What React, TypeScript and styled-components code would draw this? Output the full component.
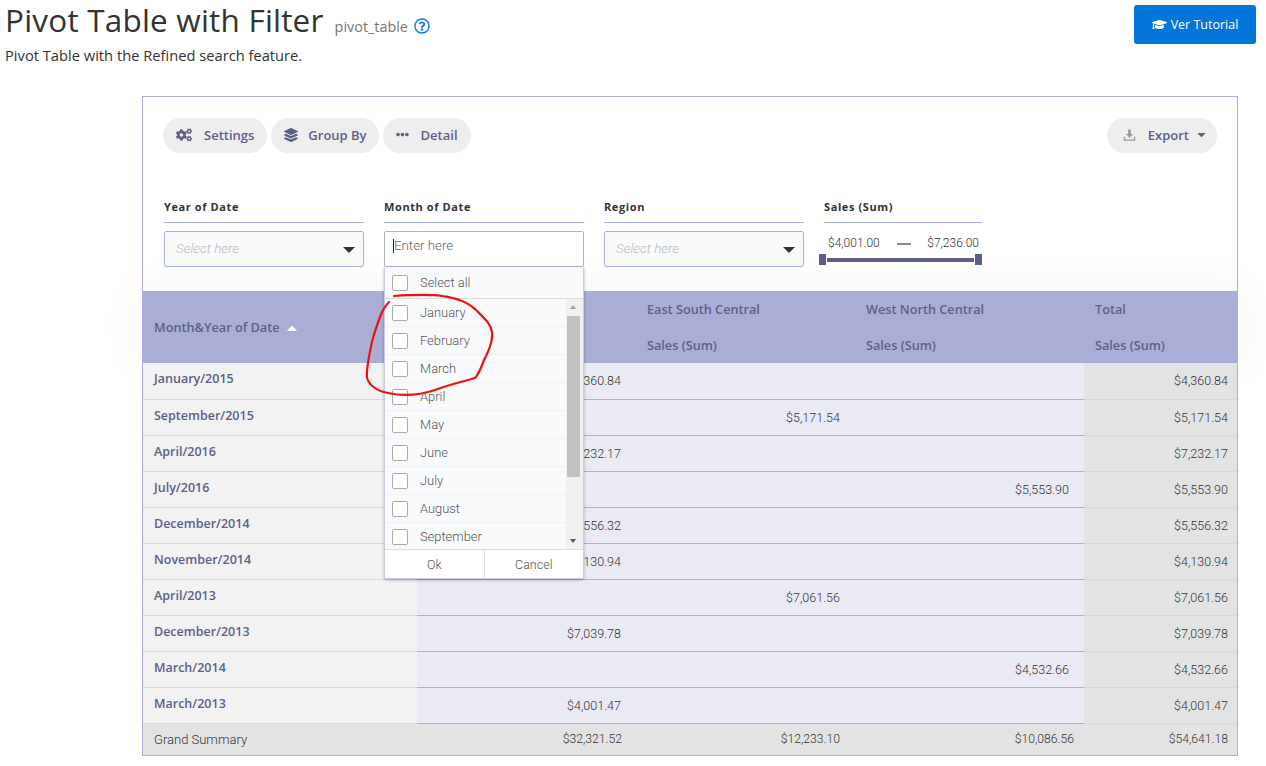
import React from 'react'
import styled, { createGlobalStyle } from 'styled-components'
import { FaCaretDown, FaCaretUp, FaCogs, FaEllipsisH, FaGraduationCap, FaLayerGroup, FaRegQuestionCircle } from 'react-icons/fa'

const GlobalStyle = createGlobalStyle`
  html, body { margin: 0; padding: 0; background: #fff; overflow: hidden; }
  body { font-family: "Open Sans", sans-serif; color: #333; }
`

const Page = styled.div`
  position: relative;
  isolation: isolate;
  width: 1266px;
  height: 766px;
  overflow: hidden;
`

const Header = styled.header`
  display: flex;
  justify-content: space-between;
  align-items: flex-start;
  height: 96px;
  padding: 5px 10px 0 5px;
  box-sizing: border-box;
`

const TitleRow = styled.div`
  display: flex;
  align-items: baseline;
  height: 34px;
  margin-top: -2px;
`

const Title = styled.h1`
  margin: 0;
  font-size: 31.5px;
  line-height: 34px;
  font-weight: 400;
  letter-spacing: 0.2px;
  color: #333;
`

const Slug = styled.span`
  margin-left: 11px;
  font-size: 14.4px;
  color: #777;
`

const HelpIcon = styled(FaRegQuestionCircle)`
  margin: 0 0 3px 6px;
  font-size: 16px;
  color: #1a7fd8;
  align-self: flex-end;
`

const Subtitle = styled.p`
  margin: 8px 0 0;
  font-size: 14.7px;
  line-height: 20px;
  color: #333;
`

const TutorialButton = styled.button`
  display: flex;
  align-items: center;
  justify-content: center;
  gap: 4px;
  width: 122px;
  height: 39px;
  border: 0;
  border-radius: 3px;
  background: #0275d8;
  color: #fff;
  font-family: "Open Sans", sans-serif;
  font-size: 12.5px;
`

const Card = styled.section`
  position: relative;
  width: 1096px;
  height: 660px;
  margin-left: 142px;
  border: 1px solid #aab0dc;
  box-sizing: border-box;
`

// soft glow the table head throws on the card and the page around it
const HeadGlow = styled.div`
  position: absolute;
  z-index: -1;
  left: 0;
  right: 0;
  top: 194px;
  height: 72px;
  box-shadow: 0 0 50px rgba(0, 0, 0, 0.05);
`

const Toolbar = styled.div`
  display: flex;
  justify-content: space-between;
  padding: 21px 20px 0;
  height: 56px;
`

const PillGroup = styled.div`
  display: flex;
  gap: 4px;
`

const Pill = styled.button<{ $icon?: number; $gap?: number; $left?: number; $right?: number }>`
  display: flex;
  align-items: center;
  height: 35px;
  padding: 0 ${p => p.$right ?? 13}px 2px ${p => p.$left ?? 13}px;
  border: 0;
  border-radius: 18px;
  background: #eeeeee;
  color: #5c6088;
  font-family: "Open Sans", sans-serif;
  font-size: 13px;
  font-weight: 600;

  svg { font-size: ${p => p.$icon ?? 16}px; margin-right: ${p => p.$gap ?? 12}px; }
`

const ExportCaret = styled(FaCaretDown)`
  && { font-size: 13px; margin: 0 0 0 6px; }
`

const Filters = styled.div`
  display: flex;
  gap: 20px;
  height: 117px;
  padding: 25px 21px 0;
  box-sizing: border-box;
`

const Filter = styled.div<{ $width?: number }>`
  position: relative;
  width: ${p => p.$width ?? 200}px;
`

const FilterLabel = styled.div`
  height: 23px;
  line-height: 16px;
  border-bottom: 1px solid #aab0dc;
  font-size: 11px;
  font-weight: 700;
  letter-spacing: 0.6px;
  color: #333;
`

const SelectBox = styled.div<{ $open?: boolean }>`
  display: flex;
  align-items: center;
  justify-content: space-between;
  height: 36px;
  margin-top: 8px;
  padding: 0 8px 0 11px;
  box-sizing: border-box;
  border: 1px solid #aab0dc;
  border-radius: 2px;
  background: ${p => (p.$open ? '#fff' : '#f9fafc')};
`

const Placeholder = styled.span`
  margin-bottom: 2px;
  font-size: 13.4px;
  font-style: italic;
  font-family: Roboto, sans-serif;
  font-weight: 300;
  color: #bbb;
`

const SelectCaret = styled.span`
  width: 0;
  height: 0;
  border-left: 6px solid transparent;
  border-right: 6px solid transparent;
  border-top: 6px solid #333;
  margin-top: 2px;
`

const OpenInput = styled.div`
  flex: 1;
  height: 28px;
  margin-left: -3px;
  margin-top: -5px;
  line-height: 26px;
  font-size: 13.3px;
  font-family: Roboto, sans-serif;
  font-weight: 300;
  color: #666;

  &::before {
    content: '';
    display: inline-block;
    width: 1px;
    height: 14px;
    vertical-align: -3px;
    background: #222;
  }
`

const Popover = styled.div`
  position: absolute;
  left: 0;
  top: 68px;
  width: 200px;
  z-index: 5;
  background: #f9fafc;
  border: 1px solid #c9cce4;
  border-top: 0;
  border-radius: 0 0 3px 3px;
  box-shadow: 0 1px 3px rgba(0, 0, 0, 0.3);
  box-sizing: border-box;
`

const CheckRow = styled.div<{ $head?: boolean }>`
  display: flex;
  align-items: center;
  gap: 12px;
  height: ${p => (p.$head ? 32 : 28)}px;
  padding-left: 7px;
  box-sizing: border-box;
  border-bottom: 1px solid ${p => (p.$head ? '#dcdcdc' : '#f1f1f5')};
  font-family: Roboto, sans-serif;
  font-size: 12.9px;
  font-weight: 300;
  color: #555;
`

const Check = styled.span`
  width: 16px;
  height: 16px;
  box-sizing: border-box;
  border: 1px solid #aaa;
  border-radius: 2px;
  background: #fff;
`

const ListWrap = styled.div`
  display: flex;
  height: 250px;
  overflow: hidden;
`

const List = styled.div`
  flex: 1;
`

const Scrollbar = styled.div`
  position: relative;
  width: 17px;
  background: #f1f1f1;
`

const ScrollThumb = styled.div`
  position: absolute;
  top: 17px;
  left: 1px;
  width: 13px;
  height: 161px;
  background: #c1c1c1;
`

const ScrollArrow = styled.span<{ $down?: boolean }>`
  position: absolute;
  left: 4px;
  ${p => (p.$down ? 'bottom: 6px;' : 'top: 6px;')}
  width: 0;
  height: 0;
  border-left: 3.5px solid transparent;
  border-right: 3.5px solid transparent;
  ${p => (p.$down ? 'border-top: 4px solid #555;' : 'border-bottom: 4px solid #a3a3a3;')}
`

const PopFooter = styled.div`
  display: flex;
  height: 28px;
  background: #fff;
  border-top: 1px solid #dcdcdc;
`

const PopAction = styled.button`
  flex: 1;
  border: 0;
  background: transparent;
  font-family: Roboto, sans-serif;
  font-size: 12.5px;
  font-weight: 300;
  color: #555;

  & + & { border-left: 1px solid #dcdcdc; }
`

const RangeValues = styled.div`
  display: flex;
  justify-content: space-between;
  align-items: center;
  height: 23px;
  margin-top: 8px;
  padding: 0 3px 0 4px;
  font-family: Roboto, sans-serif;
  font-size: 12px;
  font-weight: 300;
  color: #333;
`

const RangeDash = styled.span`
  width: 14px;
  height: 2px;
  margin-top: 2px;
  background: #7f9187;
`

const RangeTrack = styled.div`
  display: flex;
  align-items: center;
  height: 11px;
  margin: 0 0 0 -5px;
  width: 163px;
`

const RangeHandle = styled.span`
  width: 7px;
  height: 11px;
  background: #5c6088;
`

const RangeBar = styled.span`
  flex: 1;
  height: 4px;
  margin: 0 1px;
  background: #5c6088;
`

const Table = styled.table`
  width: 1094px;
  border-collapse: collapse;
  table-layout: fixed;
  font-family: Roboto, sans-serif;
  font-size: 12.5px;
  font-weight: 300;
  color: #333;
`

const HeadCell = styled.th`
  height: 36px;
  padding: 0 11px;
  background: #aaaed6;
  box-sizing: border-box;
  text-align: left;
  color: #5c6088;
  font-family: "Open Sans", sans-serif;
  font-size: 12.7px;
  font-weight: 600;
`

const SortCaret = styled(FaCaretUp)`
  margin-left: 4px;
  font-size: 16px;
  color: #fff;
  vertical-align: -4px;
`

const RowHead = styled.th`
  height: 36px;
  padding: 0 11px 4px;
  box-sizing: border-box;
  background: #f2f2f2;
  border-bottom: 1px solid #d9d9d9;
  text-align: left;
  color: #5c6088;
  font-family: "Open Sans", sans-serif;
  font-size: 12.5px;
  font-weight: 600;
`

const DataCell = styled.td<{ $total?: boolean }>`
  height: 36px;
  padding: 0 ${p => (p.$total ? 9 : 15)}px 0 0;
  box-sizing: border-box;
  text-align: right;
  background: ${p => (p.$total ? '#e3e3e3' : '#eaeaf4')};
  border-bottom: 1px solid ${p => (p.$total ? '#d9d9d9' : '#aab0dc')};
`

const SummaryCell = styled.td<{ $label?: boolean; $pad?: number }>`
  height: 32px;
  padding: 0 ${p => p.$pad ?? 9}px 0 ${p => (p.$label ? 11 : 0)}px;
  box-sizing: border-box;
  background: #e3e3e3;
  text-align: ${p => (p.$label ? 'left' : 'right')};
  font-size: ${p => (p.$label ? 13 : 12.2)}px;
`

const Annotation = styled.svg`
  position: absolute;
  inset: 0;
  z-index: 10;
  pointer-events: none;
`

const months = ['January', 'February', 'March', 'April', 'May', 'June', 'July', 'August', 'September']

// column 0..2 are the regions, the last one is the total
const rows: [string, number, string, string][] = [
  ['January/2015', 0, '$4,360.84', '$4,360.84'],
  ['September/2015', 1, '$5,171.54', '$5,171.54'],
  ['April/2016', 0, '$7,232.17', '$7,232.17'],
  ['July/2016', 2, '$5,553.90', '$5,553.90'],
  ['December/2014', 0, '$5,556.32', '$5,556.32'],
  ['November/2014', 0, '$4,130.94', '$4,130.94'],
  ['April/2013', 1, '$7,061.56', '$7,061.56'],
  ['December/2013', 0, '$7,039.78', '$7,039.78'],
  ['March/2014', 2, '$4,532.66', '$4,532.66'],
  ['March/2013', 0, '$4,001.47', '$4,001.47'],
]

function DownloadIcon() {
  return (
    <svg width="13" height="14" viewBox="0 0 14 14" fill="none">
      <path d="M5.5 1h3v5h2.5L7 10 3 6h2.5z" fill="#9a9a9a" />
      <path d="M1.5 9v3.5h11V9" stroke="#9a9a9a" strokeWidth="1.4" />
    </svg>
  )
}

export default function App() {
  return (
    <Page>
      <GlobalStyle />
      <Header>
        <div>
          <TitleRow>
            <Title>Pivot Table with Filter</Title>
            <Slug>pivot_table</Slug>
            <HelpIcon />
          </TitleRow>
          <Subtitle>Pivot Table with the Refined search feature.</Subtitle>
        </div>
        <TutorialButton>
          <FaGraduationCap size={15} /> Ver Tutorial
        </TutorialButton>
      </Header>
      <Card>
        <HeadGlow />
        <Toolbar>
          <PillGroup>
            <Pill><FaCogs />Settings</Pill>
            <Pill $icon={14} $gap={10} $right={12}><FaLayerGroup />Group By</Pill>
            <Pill $icon={13} $gap={12}><FaEllipsisH />Detail</Pill>
          </PillGroup>
          <Pill $icon={13} $left={16} $right={9}>
            <DownloadIcon />
            Export
            <ExportCaret />
          </Pill>
        </Toolbar>
        <Filters>
          <Filter>
            <FilterLabel>Year of Date</FilterLabel>
            <SelectBox>
              <Placeholder>Select here</Placeholder>
              <SelectCaret />
            </SelectBox>
          </Filter>
          <Filter>
            <FilterLabel>Month of Date</FilterLabel>
            <SelectBox $open>
              <OpenInput>Enter here</OpenInput>
            </SelectBox>
            <Popover>
              <CheckRow $head>
                <Check />
                Select all
              </CheckRow>
              <ListWrap>
                <List>
                  {months.map(m => (
                    <CheckRow key={m}>
                      <Check />
                      {m}
                    </CheckRow>
                  ))}
                </List>
                <Scrollbar>
                  <ScrollArrow />
                  <ScrollThumb />
                  <ScrollArrow $down />
                </Scrollbar>
              </ListWrap>
              <PopFooter>
                <PopAction>Ok</PopAction>
                <PopAction>Cancel</PopAction>
              </PopFooter>
            </Popover>
          </Filter>
          <Filter>
            <FilterLabel>Region</FilterLabel>
            <SelectBox>
              <Placeholder>Select here</Placeholder>
              <SelectCaret />
            </SelectBox>
          </Filter>
          <Filter $width={158}>
            <FilterLabel>Sales (Sum)</FilterLabel>
            <RangeValues>
              <span>$4,001.00</span>
              <RangeDash />
              <span>$7,236.00</span>
            </RangeValues>
            <RangeTrack>
              <RangeHandle />
              <RangeBar />
              <RangeHandle />
            </RangeTrack>
          </Filter>
        </Filters>
        <Table>
          <colgroup>
            <col style={{ width: 274 }} />
            <col style={{ width: 219 }} />
            <col style={{ width: 219 }} />
            <col style={{ width: 229 }} />
            <col style={{ width: 153 }} />
          </colgroup>
          <thead>
            <tr>
              <HeadCell rowSpan={2}>
                Month&amp;Year of Date
                <SortCaret />
              </HeadCell>
              <HeadCell />
              <HeadCell>East South Central</HeadCell>
              <HeadCell>West North Central</HeadCell>
              <HeadCell>Total</HeadCell>
            </tr>
            <tr>
              <HeadCell />
              <HeadCell>Sales (Sum)</HeadCell>
              <HeadCell>Sales (Sum)</HeadCell>
              <HeadCell>Sales (Sum)</HeadCell>
            </tr>
          </thead>
          <tbody>
            {rows.map(([label, col, value, total]) => (
              <tr key={label}>
                <RowHead>{label}</RowHead>
                {[0, 1, 2].map(i => (
                  <DataCell key={i}>{i === col ? value : ''}</DataCell>
                ))}
                <DataCell $total>{total}</DataCell>
              </tr>
            ))}
            <tr>
              <SummaryCell $label>Grand Summary</SummaryCell>
              <SummaryCell $pad={14}>$32,321.52</SummaryCell>
              <SummaryCell $pad={15}>$12,233.10</SummaryCell>
              <SummaryCell $pad={10}>$10,086.56</SummaryCell>
              <SummaryCell>$54,641.18</SummaryCell>
            </tr>
          </tbody>
        </Table>
      </Card>
      <Annotation width="1266" height="766" viewBox="0 0 1266 766" fill="none">
        <path
          d="M394 296C410 295 428 294 442 296C458 298 468 302 476 310C484 318 491 324 492 332C493 342 488 352 484 360C481 368 479 374 475 378C462 382 448 385 435 390C420 395 402 396 388 393C378 391 370 387 367 378C366 368 370 352 372 342C375 330 378 322 382 312C384 308 387 304 389 302"
          stroke="#ee1111"
          strokeWidth="2.2"
          strokeLinecap="round"
        />
      </Annotation>
    </Page>
  )
}
